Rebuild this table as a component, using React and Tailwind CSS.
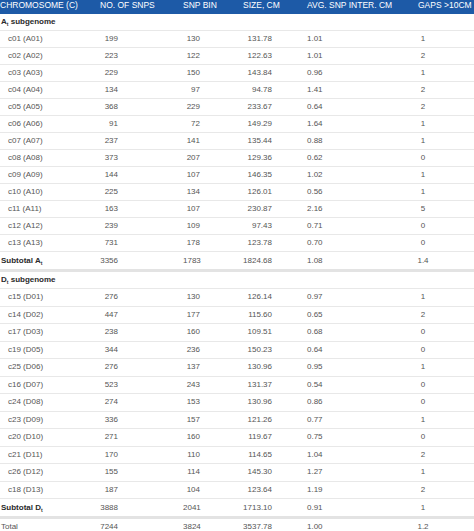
const aRows = [
  ['c01 (A01)', '199', '130', '131.78', '1.01', '1'],
  ['c02 (A02)', '223', '122', '122.63', '1.01', '2'],
  ['c03 (A03)', '229', '150', '143.84', '0.96', '1'],
  ['c04 (A04)', '134', '97', '94.78', '1.41', '2'],
  ['c05 (A05)', '368', '229', '233.67', '0.64', '2'],
  ['c06 (A06)', '91', '72', '149.29', '1.64', '1'],
  ['c07 (A07)', '237', '141', '135.44', '0.88', '1'],
  ['c08 (A08)', '373', '207', '129.36', '0.62', '0'],
  ['c09 (A09)', '144', '107', '146.35', '1.02', '1'],
  ['c10 (A10)', '225', '134', '126.01', '0.56', '1'],
  ['c11 (A11)', '163', '107', '230.87', '2.16', '5'],
  ['c12 (A12)', '239', '109', '97.43', '0.71', '0'],
  ['c13 (A13)', '731', '178', '123.78', '0.70', '0'],
];

const dRows = [
  ['c15 (D01)', '276', '130', '126.14', '0.97', '1'],
  ['c14 (D02)', '447', '177', '115.60', '0.65', '2'],
  ['c17 (D03)', '238', '160', '109.51', '0.68', '0'],
  ['c19 (D05)', '344', '236', '150.23', '0.64', '0'],
  ['c25 (D06)', '276', '137', '130.96', '0.95', '1'],
  ['c16 (D07)', '523', '243', '131.37', '0.54', '0'],
  ['c24 (D08)', '274', '153', '130.96', '0.86', '0'],
  ['c23 (D09)', '336', '157', '121.26', '0.77', '1'],
  ['c20 (D10)', '271', '160', '119.67', '0.75', '0'],
  ['c21 (D11)', '170', '110', '114.65', '1.04', '2'],
  ['c26 (D12)', '155', '114', '145.30', '1.27', '1'],
  ['c18 (D13)', '187', '104', '123.64', '1.19', '2'],
];

// column starts: 0, 100, 183, 243, 307, 418
const grid = 'grid grid-cols-[100px_83px_60px_64px_111px_1fr] items-center';

const Row = ({ label, cells, bold, thick, indent = true, h = 'h-[17px]' }) => (
  <div
    className={`${grid} ${thick ? 'h-[20px] border-b-[3px] border-[#e3e3e3]' : `${h} border-b border-[#e8e8e8]`}`}
  >
    <div className={`${indent ? 'pl-[8px]' : 'pl-[1px]'} ${bold ? 'font-bold text-[#2a2a2a]' : ''} whitespace-nowrap`}>
      {label}
    </div>
    <div className="w-[18px] text-right whitespace-nowrap">{cells[0]}</div>
    <div className="w-[17px] text-right whitespace-nowrap">{cells[1]}</div>
    <div className="w-[29px] text-right whitespace-nowrap">{cells[2]}</div>
    <div className="whitespace-nowrap">{cells[3]}</div>
    <div className="w-[10px] flex justify-center whitespace-nowrap">{cells[4]}</div>
  </div>
);

const Sub = () => <sub className="text-[5px] -bottom-[2px]">t</sub>;

const Group = ({ letter }) => (
  <div className="h-[17px] border-b border-[#e8e8e8] flex items-center pl-[1px] font-bold text-[#2a2a2a]">
    {letter}
    <Sub />
    <span>&nbsp;subgenome</span>
  </div>
);

export default function App() {
  return (
    <div
      className="w-[474px] h-[531px] overflow-hidden bg-white text-[8px] text-[#555]"
      style={{ fontFamily: '"Liberation Sans", Arial, sans-serif' }}
    >
      <div className={`${grid} h-[14px] bg-[#1d5aa7] text-white text-[8.5px] uppercase overflow-hidden items-start`}>
        <div className="whitespace-nowrap leading-[12px] -mt-[1px]">Chromosome (C)</div>
        <div className="whitespace-nowrap leading-[12px] -mt-[1px]">No. of SNPs</div>
        <div className="whitespace-nowrap leading-[12px] -mt-[1px]">SNP bin</div>
        <div className="whitespace-nowrap leading-[12px] -mt-[1px]">Size, cM</div>
        <div className="whitespace-nowrap leading-[12px] -mt-[1px]">Avg. SNP inter. cM</div>
        <div className="whitespace-nowrap leading-[12px] -mt-[1px]">Gaps &gt;10cM</div>
      </div>

      <Group letter="A" />
      {aRows.map((r) => (
        <Row key={r[0]} label={r[0]} cells={r.slice(1)} />
      ))}
      <Row
        label={<span>Subtotal A<Sub /></span>}
        cells={['3356', '1783', '1824.68', '1.08', '1.4']}
        bold
        thick
        indent={false}
      />

      <Group letter="D" />
      {dRows.map((r) => (
        <Row key={r[0]} label={r[0]} cells={r.slice(1)} h="h-[17.5px]" />
      ))}
      <Row
        label={<span>Subtotal D<Sub /></span>}
        cells={['3888', '2041', '1713.10', '0.91', '1']}
        bold
        thick
        indent={false}
      />
      <Row label="Total" cells={['7244', '3824', '3537.78', '1.00', '1.2']} indent={false} />
    </div>
  );
}
